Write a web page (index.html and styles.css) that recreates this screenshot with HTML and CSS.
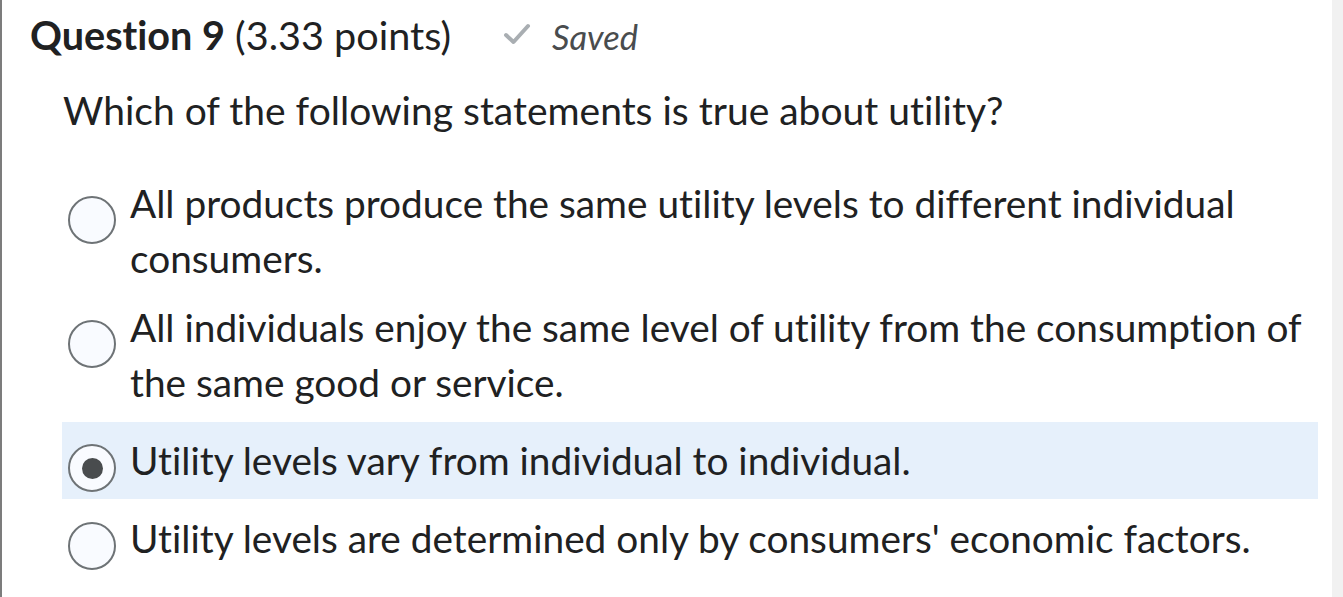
FILE: index.html
```html
<!DOCTYPE html>
<html lang="en">
<head>
<meta charset="utf-8">
<title>Question 9</title>
<link rel="stylesheet" href="styles.css">
</head>
<body>
<div class="page">
  <main class="main">
    <div class="q-header">
      <h2 class="q-title"><strong>Question 9</strong> (3.33 points)</h2>
      <span class="saved">
        <svg class="check" viewBox="0 0 28 22" width="28" height="22" aria-hidden="true">
          <path d="M3 12 L10.5 19 L25 3" fill="none" stroke="#a9aeb2" stroke-width="4" stroke-linecap="round" stroke-linejoin="round"/>
        </svg>
        <em>Saved</em>
      </span>
    </div>
    <p class="q-text">Which of the following statements is true about utility?</p>
    <ul class="options">
      <li class="option option--wrap option--first">
        <span class="radio"></span>
        <span class="label">All products produce the same utility levels to different individual consumers.</span>
      </li>
      <li class="option option--wrap">
        <span class="radio"></span>
        <span class="label">All individuals enjoy the same level of utility from the consumption of the same good or service.</span>
      </li>
      <li class="option option--selected">
        <span class="radio radio--checked"></span>
        <span class="label">Utility levels vary from individual to individual.</span>
      </li>
      <li class="option">
        <span class="radio"></span>
        <span class="label">Utility levels are determined only by consumers' economic factors.</span>
      </li>
    </ul>
  </main>
  <aside class="rail"></aside>
</div>
</body>
</html>
```

FILE: styles.css
```css
html, body {
  margin: 0;
  padding: 0;
  background: #ffffff;
}

body {
  font-family: Lato, "Open Sans", "Liberation Sans", sans-serif;
  color: #202122;
  overflow: hidden;
  font-variant-ligatures: none;
  font-feature-settings: "liga" 0, "clig" 0;
}

.page {
  display: flex;
  height: 597px;
  border-left: 2px solid #7c7c7c;
}

.main {
  flex: 1;
  padding: 11px 14px 0 28px;
}

.rail {
  width: 11px;
  background: #f1f1f1;
}

.q-header {
  display: flex;
  align-items: baseline;
  gap: 52px;
  height: 47px;
}

.q-title {
  margin: 0;
  font-size: 39.6px;
  line-height: 47px;
  font-weight: 400;
}

.q-title strong {
  font-weight: 700;
}

.saved {
  display: inline-flex;
  align-items: baseline;
  gap: 21px;
  color: #494c4e;
  font-size: 34.5px;
}

.saved em {
  font-style: italic;
}

.check {
  align-self: center;
  position: relative;
  top: -3px;
}

.q-text {
  margin: 28px 0 0 33px;
  font-size: 39px;
  line-height: 48px;
}

.options {
  list-style: none;
  margin: 31px 0 0 32px;
  padding: 0;
  display: flex;
  flex-direction: column;
  gap: 1px;
}

.option {
  display: flex;
  align-items: flex-start;
  gap: 14px;
  padding: 11px 0 11px 6px;
  font-size: 38.8px;
  line-height: 55px;
}

.option--first {
  padding-bottom: 2px;
}

.option--selected {
  background: #e6f0fb;
}

.radio {
  flex: none;
  box-sizing: border-box;
  width: 48px;
  height: 48px;
  margin-top: 11px;
  margin-bottom: -4px;
  border: 2px solid #6e7376;
  border-radius: 50%;
  background: #f9fbff;
  display: flex;
  align-items: center;
  justify-content: center;
}

.option--wrap .radio {
  margin-top: 20px;
}

.radio--checked::after {
  content: "";
  width: 21px;
  height: 21px;
  border-radius: 50%;
  background: #494c4e;
}

.label {
  flex: 1;
}
```
